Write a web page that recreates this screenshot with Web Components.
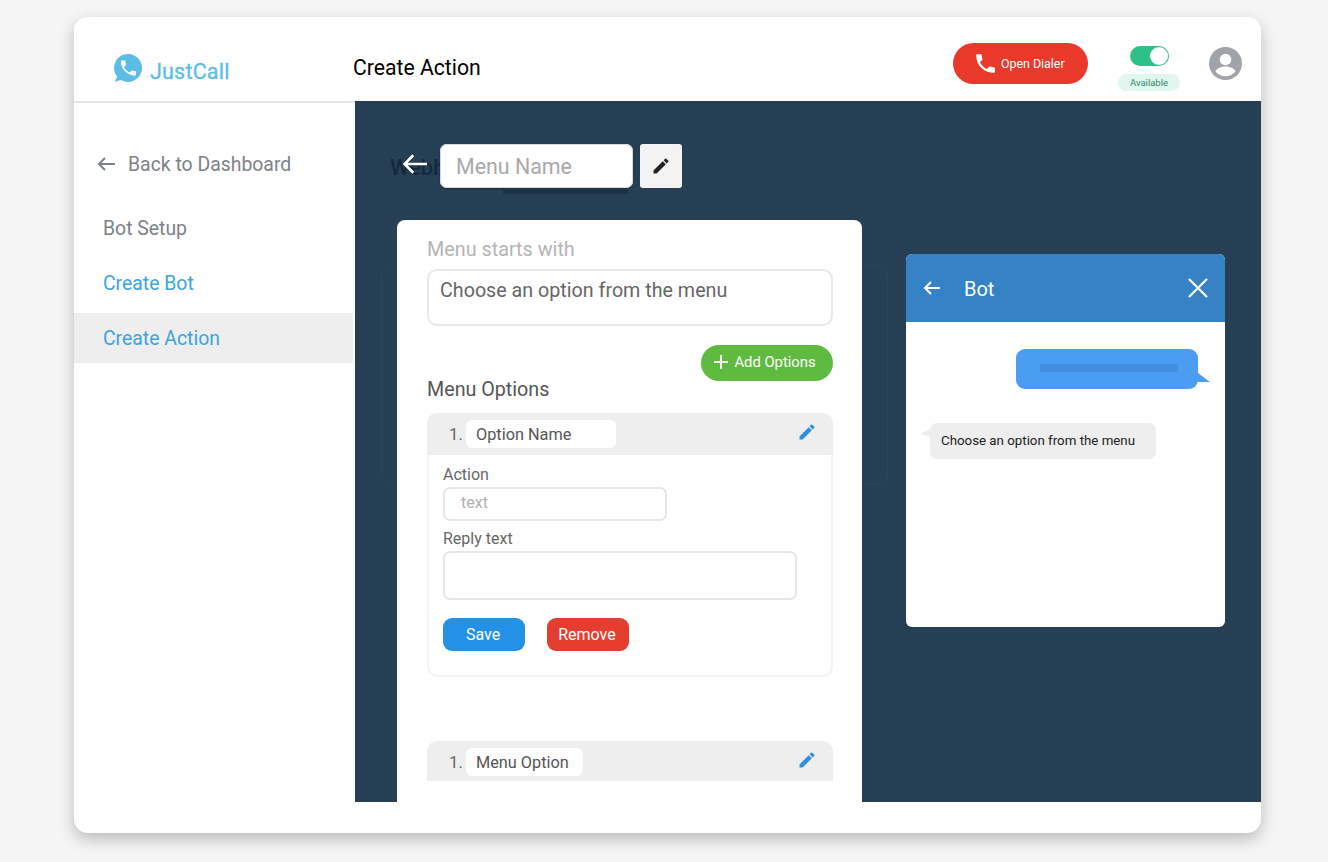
<!DOCTYPE html>
<html>
<head>
<meta charset="utf-8">
<title>Create Action</title>
<style>
  html, body { margin: 0; height: 100%; }
  body {
    background: #f5f5f5;
    font-family: Roboto, "Liberation Sans", sans-serif;
    padding: 17px 67px 0 74px;
    box-sizing: border-box;
    overflow: hidden;
  }
</style>
</head>
<body>

<jc-window>
  <jc-header slot="header" title="Create Action"></jc-header>
  <jc-sidebar slot="sidebar">
    <jc-nav-item kind="back">Back to Dashboard</jc-nav-item>
    <jc-nav-item kind="plain">Bot Setup</jc-nav-item>
    <jc-nav-item kind="link">Create Bot</jc-nav-item>
    <jc-nav-item kind="active">Create Action</jc-nav-item>
  </jc-sidebar>
  <jc-main slot="main">
    <jc-title-row slot="top" placeholder="Menu Name"></jc-title-row>
    <jc-menu-card slot="card">
      <jc-option-card number="1." name="Option Name" open>
        <jc-action-form></jc-action-form>
      </jc-option-card>
      <jc-option-card number="1." name="Menu Option"></jc-option-card>
    </jc-menu-card>
    <jc-chat-preview slot="preview" title="Bot" message="Choose an option from the menu"></jc-chat-preview>
  </jc-main>
</jc-window>

<script>
const ICONS = {
  pencil: '<path d="M3 17.25V21h3.75L17.81 9.94l-3.75-3.75L3 17.25zM20.71 7.04a1 1 0 0 0 0-1.41l-2.34-2.34a1 1 0 0 0-1.41 0l-1.83 1.83 3.75 3.75 1.83-1.83z"/>',
  phone: '<path d="M6.62 10.79c1.44 2.83 3.76 5.14 6.59 6.59l2.2-2.2c.27-.27.67-.36 1.02-.24 1.12.37 2.33.57 3.57.57.55 0 1 .45 1 1V20c0 .55-.45 1-1 1-9.39 0-17-7.61-17-17 0-.55.45-1 1-1h3.5c.55 0 1 .45 1 1 0 1.25.2 2.45.57 3.57.11.35.03.74-.25 1.02l-2.2 2.2z"/>'
};

function icon(name, size, colour) {
  return `<svg width="${size}" height="${size}" viewBox="0 0 24 24" fill="${colour}">${ICONS[name]}</svg>`;
}

function arrow(width, height, colour, stroke) {
  const mid = height / 2;
  const head = height / 2 - stroke / 2;
  return `<svg width="${width}" height="${height}" viewBox="0 0 ${width} ${height}" fill="none" stroke="${colour}" stroke-width="${stroke}">
    <path d="M${width} ${mid}H${stroke}M${head + stroke} ${stroke / 2}L${stroke} ${mid}L${head + stroke} ${height - stroke / 2}"/></svg>`;
}

class JcWindow extends HTMLElement {
  constructor() {
    super();
    this.attachShadow({ mode: 'open' });
    this.shadowRoot.innerHTML = `
      <style>
        :host {
          display: block;
          width: 1187px;
          height: 816px;
          background: #fff;
          border-radius: 14px;
          box-shadow: 0 6px 16px rgba(0,0,0,.24);
          overflow: hidden;
        }
        .row { display: flex; height: 701px; }
      </style>
      <slot name="header"></slot>
      <div class="row">
        <slot name="sidebar"></slot>
        <slot name="main"></slot>
      </div>
    `;
  }
}

class JcHeader extends HTMLElement {
  constructor() {
    super();
    this.attachShadow({ mode: 'open' });
    this.shadowRoot.innerHTML = `
      <style>
        :host { display: flex; align-items: center; height: 84px; background: #fff; }
        .brand { display: flex; align-items: center; width: 279px; padding: 18px 0 0 39px; box-sizing: border-box; }
        .brand span { font-size: 21.500px; color: #5cbce8; margin: 7px 0 0 7px; letter-spacing: .2px; -webkit-text-stroke: .3px #5cbce8; }
        h1 { margin: 16px 0 0; font-size: 21.200px; font-weight: 400; color: #000; flex: 1; }
        .dialer {
          display: flex; align-items: center; gap: 3px;
          width: 135px; height: 41px; margin: 9px 30px 0 0; padding-left: 20px; box-sizing: border-box;
          background: #e8392a; color: #fff; border-radius: 21px; font-size: 12.400px;
        }
        .status { display: flex; flex-direction: column; align-items: center; width: 62px; margin: 19px 29px 0 0; }
        .toggle { width: 39px; height: 20px; background: #2fc08a; border-radius: 10px; position: relative; }
        .toggle::after {
          content: ""; position: absolute; right: 1px; top: 1px;
          width: 18px; height: 18px; border-radius: 50%; background: #fff;
        }
        .pill {
          width: 62px; height: 17px; margin-top: 8px; line-height: 18px; text-align: center;
          background: #e0f6ef; color: #2f8a6c; border-radius: 9px; font-size: 9.500px;
        }
        .avatar { margin: 9px 19px 0 0; display: block; }
      </style>
      <div class="brand">
        <svg width="30" height="30" viewBox="0 0 30 30">
          <path fill="#5cbce8" d="M15 1a14 14 0 1 1-7.2 26L1.600 28.700l2.600-4.900A14 14 0 0 1 15 1z"/>
          <g transform="translate(5.400 5) scale(.84)"><path fill="#fff" d="M6.620 10.790c1.440 2.830 3.760 5.140 6.590 6.590l2.200-2.200c.27-.27.67-.36 1.020-.24 1.120.37 2.330.57 3.570.57.55 0 1 .45 1 1V20c0 .55-.45 1-1 1-9.390 0-17-7.610-17-17 0-.55.45-1 1-1h3.500c.55 0 1 .45 1 1 0 1.250.2 2.450.57 3.570.11.35.03.74-.25 1.020l-2.200 2.200z"/></g>
        </svg>
        <span>JustCall</span>
      </div>
      <h1>${this.getAttribute('title')}</h1>
      <div class="dialer">${icon('phone', 25, '#fff')}<span>Open Dialer</span></div>
      <div class="status"><div class="toggle"></div><div class="pill">Available</div></div>
      <svg class="avatar" width="33" height="33" viewBox="0 0 33 33">
        <circle cx="16.500" cy="16.500" r="16.500" fill="#a0a4a9"/>
        <circle cx="16.500" cy="12.500" r="5.800" fill="#fff"/>
        <path fill="#fff" d="M6.500 24.500c1.500-3.600 6-5 10-5s8.500 1.400 10 5a13 13 0 0 1-20 0z"/>
      </svg>
    `;
  }
}

class JcSidebar extends HTMLElement {
  constructor() {
    super();
    this.attachShadow({ mode: 'open' });
    this.shadowRoot.innerHTML = `
      <style>
        :host {
          display: flex; flex-direction: column;
          width: 281px; flex: none; box-sizing: border-box;
          padding: 35px 2px 0 0;
          border-top: 2px solid #e6e6e6;
          background: #fff;
        }
      </style>
      <slot></slot>
    `;
  }
}

class JcNavItem extends HTMLElement {
  constructor() {
    super();
    this.attachShadow({ mode: 'open' });
    const kind = this.getAttribute('kind');
    const lead = kind === 'back' ? arrow(18, 14, '#7d8287', 2) : '';
    this.shadowRoot.innerHTML = `
      <style>
        :host {
          display: flex; align-items: center; gap: 13px;
          height: 50px; margin-bottom: 5px;
          padding-left: 29px;
          font-size: 19.400px; color: #7d8287;
        }
        :host([kind="back"]) { padding: 2px 0 0 23px; height: 48px; margin-bottom: 15px; }
        :host([kind="link"]), :host([kind="active"]) { color: #3aa5dc; }
        :host([kind="active"]) { background: #eee; }
      </style>
      ${lead}<slot></slot>
    `;
  }
}

class JcMain extends HTMLElement {
  constructor() {
    super();
    this.attachShadow({ mode: 'open' });
    this.shadowRoot.innerHTML = `
      <style>
        :host {
          display: flex; gap: 44px; flex: 1; min-width: 0;
          position: relative; box-sizing: border-box;
          height: 701px; margin-top: 0; padding: 43px 0 0 42px;
          background: #263f55; overflow: hidden;
        }
        .left { display: flex; flex-direction: column; width: 465px; flex: none; }
        .right { padding-top: 110px; }
        /* faded page that shows through behind the card */
        .ghost {
          position: absolute; left: 26px; top: 164px; width: 507px; height: 220px;
          border: 1px solid #2b4459; border-radius: 10px; box-sizing: border-box;
        }
        .under {
          position: absolute; left: 148px; top: 89px; width: 125px; height: 4px; background: #1b3147;
        }
        .left, .right { position: relative; }
      </style>
      <div class="ghost"></div>
      <div class="under"></div>
      <div class="left">
        <slot name="top"></slot>
        <slot name="card"></slot>
      </div>
      <div class="right"><slot name="preview"></slot></div>
    `;
  }
}

class JcTitleRow extends HTMLElement {
  constructor() {
    super();
    this.attachShadow({ mode: 'open' });
    this.shadowRoot.innerHTML = `
      <style>
        :host { display: flex; align-items: center; height: 44px; margin-bottom: 32px; padding-left: 5px; position: relative; }
        .behind { position: absolute; left: -7px; top: 11px; font-size: 22px; font-weight: 500; color: #15283c; }
        .back { position: relative; display: block; margin-right: 13px; }
        .field {
          position: relative; width: 193px; height: 44px; box-sizing: border-box;
          padding-left: 16px; line-height: 45px;
          background: #fff; border-radius: 7px; box-shadow: 0 0 0 1px #d9d9d9 inset, 0 1px 2px rgba(0,0,0,.3);
          color: #a8a8a8; font-size: 21.400px;
        }
        .edit {
          display: flex; align-items: center; justify-content: center;
          width: 42px; height: 44px; margin-left: 7px; background: #f3f3f3; border-radius: 3px;
        }
      </style>
      <span class="behind">Webh</span>
      <span class="back">${arrow(25, 20, '#fff', 2.5)}</span>
      <div class="field">${this.getAttribute('placeholder')}</div>
      <div class="edit">${icon('pencil', 20, '#222')}</div>
    `;
  }
}

class JcMenuCard extends HTMLElement {
  constructor() {
    super();
    this.attachShadow({ mode: 'open' });
    this.shadowRoot.innerHTML = `
      <style>
        :host {
          display: block; height: 582px; overflow: hidden; box-sizing: border-box;
          padding: 18px 29px 0 30px;
          background: #fff; border-radius: 8px 8px 0 0;
          color: #555;
        }
        .label { font-size: 19.800px; line-height: 24px; color: #b4b4b4; margin-bottom: 7px; }
        .starts {
          height: 57px; box-sizing: border-box; padding: 7px 11px;
          border: 2px solid #e8e8e8; border-radius: 10px;
          font-size: 19.700px; line-height: 26px; color: #666;
        }
        .add-row { display: flex; justify-content: flex-end; margin-top: 19px; }
        .add {
          display: flex; align-items: center; gap: 5px; justify-content: center;
          width: 132px; height: 36px; border-radius: 18px; box-sizing: border-box; padding: 0 5px 2px 0;
          background: #5fbb3f; color: #fff; font-size: 14.800px;
        }
        .heading { font-size: 19.700px; line-height: 24px; color: #555; margin: -3px 0 11px; }
      </style>
      <div class="label">Menu starts with</div>
      <div class="starts">Choose an option from the menu</div>
      <div class="add-row">
        <div class="add">
          <svg width="16" height="16" viewBox="0 0 16 16" stroke="#fff" stroke-width="2"><path d="M8 1v14M1 8h14"/></svg>
          Add Options
        </div>
      </div>
      <div class="heading">Menu Options</div>
      <slot></slot>
    `;
  }
}

class JcOptionCard extends HTMLElement {
  constructor() {
    super();
    this.attachShadow({ mode: 'open' });
    this.shadowRoot.innerHTML = `
      <style>
        :host { display: block; margin-bottom: 64px; border-radius: 10px; }
        :host([open]) { border: 2px solid #f3f3f3; box-sizing: border-box; height: 264px; }
        .head {
          display: flex; align-items: center; height: 40px; box-sizing: border-box;
          padding: 2px 16px 0 22px;
          background: #eee; border-radius: 10px 10px 0 0; color: #666; font-size: 16.800px;
        }
        :host([open]) .head { margin: -2px -2px 0; height: 42px; padding-top: 0; }
        .num { width: 17px; }
        .name {
          height: 28px; line-height: 30px; padding: 0 14px 0 10px; min-width: 0;
          background: #fff; border-radius: 6px; font-size: 16.300px; color: #555;
        }
        :host([open]) .name { width: 150px; box-sizing: border-box; }
        .head svg { margin-left: auto; margin-top: -4px; }
      </style>
      <div class="head">
        <span class="num">${this.getAttribute('number')}</span>
        <span class="name">${this.getAttribute('name')}</span>
        ${icon('pencil', 20, '#2b8fe6')}
      </div>
      <slot></slot>
    `;
  }
}

class JcActionForm extends HTMLElement {
  constructor() {
    super();
    this.attachShadow({ mode: 'open' });
    this.shadowRoot.innerHTML = `
      <style>
        :host { display: block; padding: 9px 0 0 14px; font-size: 16px; color: #666; }
        label { display: block; line-height: 22px; }
        .box { box-sizing: border-box; border: 2px solid #e6e6e6; border-radius: 7px; }
        .action {
          width: 224px; height: 34px; margin: 1px 0 7px; padding-left: 16px;
          line-height: 27px; color: #b0b0b0;
        }
        .reply { width: 354px; height: 49px; margin-top: 1px; }
        .buttons { display: flex; gap: 22px; margin-top: 18px; }
        .btn {
          width: 82px; height: 33px; line-height: 33px; text-align: center; box-sizing: border-box; padding-right: 2px;
          color: #fff; border-radius: 9px; font-size: 16px;
        }
        .save { background: #2291e6; }
        .remove { background: #e53e30; }
      </style>
      <label>Action</label>
      <div class="box action">text</div>
      <label>Reply text</label>
      <div class="box reply"></div>
      <div class="buttons">
        <div class="btn save">Save</div>
        <div class="btn remove">Remove</div>
      </div>
    `;
  }
}

class JcChatPreview extends HTMLElement {
  constructor() {
    super();
    this.attachShadow({ mode: 'open' });
    this.shadowRoot.innerHTML = `
      <style>
        :host { display: block; width: 319px; height: 373px; background: #fff; border-radius: 6px; overflow: hidden; }
        .top {
          display: flex; align-items: center; height: 68px; box-sizing: border-box;
          padding: 0 17px; background: #3582c4; color: #fff; font-size: 20px;
        }
        .top span { margin-left: 24px; padding-top: 2px; flex: 1; }
        .thread { display: flex; flex-direction: column; padding: 27px 27px 0 24px; }
        .sent {
          position: relative; align-self: flex-end; display: flex; align-items: center; justify-content: center;
          width: 182px; height: 40px; background: #4a9df0; border-radius: 9px;
        }
        .sent::before { content: ""; width: 138px; height: 8px; margin: -2px 0 0 4px; background: #4290e0; }
        .sent::after {
          content: ""; position: absolute; right: -12px; bottom: 7px; width: 12px; height: 9px;
          background: #4a9df0; clip-path: polygon(0 0, 100% 100%, 0 100%);
        }
        .got {
          position: relative; align-self: flex-start; margin-top: 34px;
          width: 226px; height: 36px; line-height: 36px; box-sizing: border-box; padding-left: 11px;
          background: #eee; border-radius: 7px; font-size: 13.300px; color: #222;
        }
        .got::after {
          content: ""; position: absolute; left: -10px; top: 6px; width: 10px; height: 8px;
          background: #eee; clip-path: polygon(100% 0, 100% 100%, 0 60%);
        }
      </style>
      <div class="top">
        ${arrow(17, 14, '#fff', 2)}
        <span>${this.getAttribute('title')}</span>
        <svg width="20" height="20" viewBox="0 0 20 20" stroke="#fff" stroke-width="2.200"><path d="M1 1l18 18M19 1L1 19"/></svg>
      </div>
      <div class="thread">
        <div class="sent"></div>
        <div class="got">${this.getAttribute('message')}</div>
      </div>
    `;
  }
}

customElements.define('jc-window', JcWindow);
customElements.define('jc-header', JcHeader);
customElements.define('jc-sidebar', JcSidebar);
customElements.define('jc-nav-item', JcNavItem);
customElements.define('jc-main', JcMain);
customElements.define('jc-title-row', JcTitleRow);
customElements.define('jc-menu-card', JcMenuCard);
customElements.define('jc-option-card', JcOptionCard);
customElements.define('jc-action-form', JcActionForm);
customElements.define('jc-chat-preview', JcChatPreview);
</script>
</body>
</html>
